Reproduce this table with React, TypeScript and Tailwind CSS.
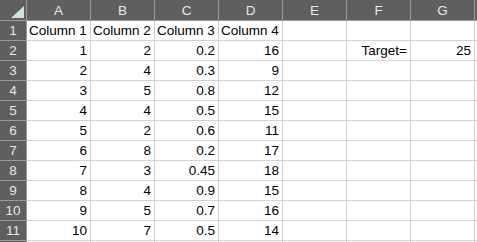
import React from "react";

const cols = ["A", "B", "C", "D", "E", "F", "G", ""];

type Cell = { v: string; align?: "left" | "right" };

const rows: Cell[][] = [
	[{ v: "Column 1" }, { v: "Column 2" }, { v: "Column 3" }, { v: "Column 4" }],
	[{ v: "1", align: "right" }, { v: "2", align: "right" }, { v: "0.2", align: "right" }, { v: "16", align: "right" }, { v: "" }, { v: "Target=", align: "right" }, { v: "25", align: "right" }],
	[{ v: "2", align: "right" }, { v: "4", align: "right" }, { v: "0.3", align: "right" }, { v: "9", align: "right" }],
	[{ v: "3", align: "right" }, { v: "5", align: "right" }, { v: "0.8", align: "right" }, { v: "12", align: "right" }],
	[{ v: "4", align: "right" }, { v: "4", align: "right" }, { v: "0.5", align: "right" }, { v: "15", align: "right" }],
	[{ v: "5", align: "right" }, { v: "2", align: "right" }, { v: "0.6", align: "right" }, { v: "11", align: "right" }],
	[{ v: "6", align: "right" }, { v: "8", align: "right" }, { v: "0.2", align: "right" }, { v: "17", align: "right" }],
	[{ v: "7", align: "right" }, { v: "3", align: "right" }, { v: "0.45", align: "right" }, { v: "18", align: "right" }],
	[{ v: "8", align: "right" }, { v: "4", align: "right" }, { v: "0.9", align: "right" }, { v: "15", align: "right" }],
	[{ v: "9", align: "right" }, { v: "5", align: "right" }, { v: "0.7", align: "right" }, { v: "16", align: "right" }],
	[{ v: "10", align: "right" }, { v: "7", align: "right" }, { v: "0.5", align: "right" }, { v: "14", align: "right" }],
	[],
];

export default function App() {
	return (
		<div
			className="w-[477px] h-[242px] overflow-hidden bg-white text-[13.5px] leading-none"
			style={{ fontFamily: '"Liberation Sans", Arial, sans-serif' }}
		>
			{/* column header row */}
			<div className="flex h-[21px]">
				<div className="w-[27px] shrink-0 h-[21px] bg-[#5f5f5f] border-r border-b border-[#9a9a9a] flex items-end justify-end pr-[2px] pb-[2px]">
					<svg width="13" height="12" viewBox="0 0 13 12">
						<polygon points="13,0 13,12 0,12" fill="#cfe3d6" />
					</svg>
				</div>
				{cols.map((c, j) => (
					<div
						key={j}
						className="w-[64px] shrink-0 h-[21px] bg-[#5f5f5f] border-r border-b border-[#9a9a9a] flex items-center justify-center text-[#e8e8e8] pt-[1px]"
					>
						{c}
					</div>
				))}
			</div>

			{rows.map((r, i) => (
				<div key={i} className="flex h-[20px]">
					<div className="w-[27px] shrink-0 h-[20px] bg-[#5f5f5f] border-r border-b border-[#9a9a9a] flex items-center justify-center text-[#e8e8e8] pt-[1px]">
						{i < 11 ? i + 1 : ""}
					</div>
					{cols.map((c, j) => {
						const cell = r[j];
						return (
							<div
								key={j}
								className={`w-[64px] shrink-0 h-[20px] border-r border-b border-[#d4d4d4] flex items-center whitespace-nowrap text-black pt-[1px] ${
									cell?.align === "right" ? "justify-end pr-[3px]" : "justify-start pl-[2px]"
								}`}
							>
								{cell?.v}
							</div>
						);
					})}
				</div>
			))}
		</div>
	);
}
